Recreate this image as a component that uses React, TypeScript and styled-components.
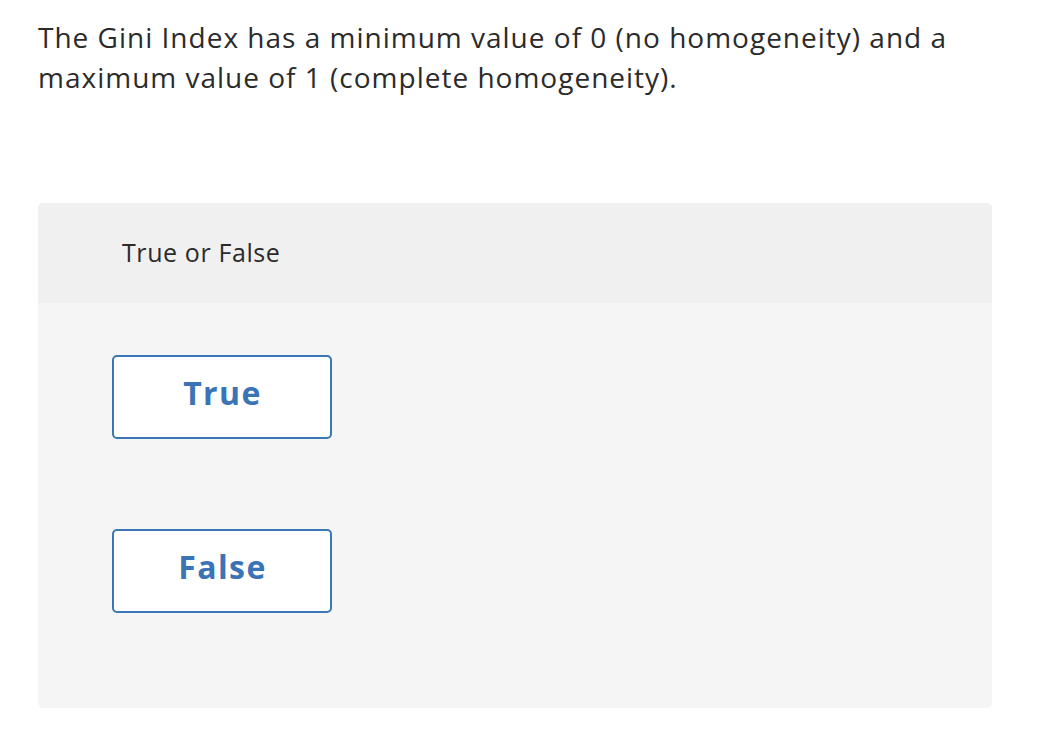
import React from "react";
import styled, { createGlobalStyle } from "styled-components";

const Global = createGlobalStyle`
  html, body { margin: 0; padding: 0; background: #ffffff; }
  body { font-family: "Open Sans", "Liberation Sans", sans-serif; }
`;

const Page = styled.div`
  padding: 17px 58px 40px 38px;
  width: 1050px;
  box-sizing: border-box;
`;

const Question = styled.p`
  margin: 0;
  font-size: 28px;
  line-height: 40px;
  letter-spacing: 1px;
  color: #2b2b2b;
  max-width: 925px;
`;

const Panel = styled.section`
  margin-top: 106px;
  width: 954px;
  border-radius: 5px;
  overflow: hidden;
  background: #f5f5f5;
`;

const PanelHeader = styled.div`
  height: 100px;
  box-sizing: border-box;
  background: #f0f0f0;
  display: flex;
  align-items: center;
  padding: 0 0 2px 84px;
  font-size: 25px;
  letter-spacing: 0.6px;
  color: #2b2b2b;
`;

const Options = styled.div`
  display: flex;
  flex-direction: column;
  align-items: flex-start;
  gap: 90px;
  padding: 52px 0 95px 74px;
`;

const Option = styled.button`
  width: 220px;
  height: 84px;
  box-sizing: border-box;
  border: 2px solid #3a76b8;
  border-radius: 5px;
  background: #ffffff;
  color: #3a74b6;
  font-family: "Open Sans", "Liberation Sans", sans-serif;
  font-weight: 700;
  font-size: 32px;
  letter-spacing: 1.4px;
  cursor: pointer;
  display: flex;
  align-items: center;
  justify-content: center;
  padding: 0 0 10px 1px;
`;

export default function App() {
  return (
    <>
      <Global />
      <Page>
        <Question>
          The Gini Index has a minimum value of 0 (no homogeneity) and a maximum value of 1 (complete homogeneity).
        </Question>
        <Panel>
          <PanelHeader>True or False</PanelHeader>
          <Options>
            <Option>True</Option>
            <Option>False</Option>
          </Options>
        </Panel>
      </Page>
    </>
  );
}
